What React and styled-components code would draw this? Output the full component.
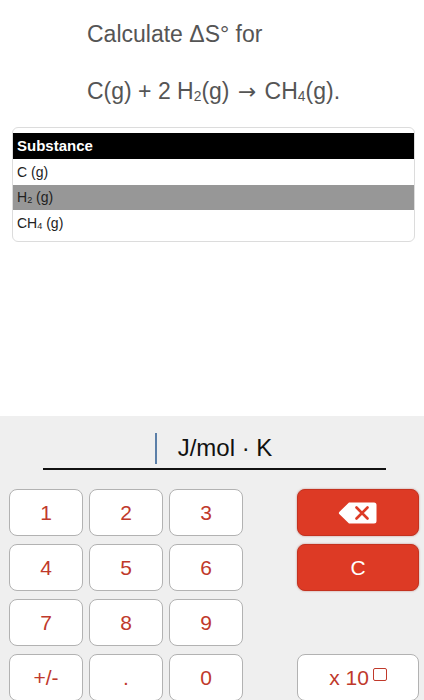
import React from "react";
import styled, { createGlobalStyle } from "styled-components";

const GlobalStyle = createGlobalStyle`
  html, body {
    margin: 0;
    padding: 0;
    background: #fff;
  }
  body {
    font-family: "Liberation Sans", Arial, sans-serif;
  }
`;

const Page = styled.div`
  display: flex;
  flex-direction: column;
  min-height: 100vh;
`;

const Question = styled.div`
  padding: 20px 0 0 87px;
  color: #555;
  font-size: 23px;
`;

const Line = styled.p`
  margin: 0 0 ${props => props.gap || 0}px;
  line-height: 28px;
  height: 28px;
`;

const Sub = styled.sub`
  font-size: ${props => props.size || 0.6}em;
  vertical-align: -0.15em;
  line-height: 0;
`;

const Arrow = styled.span`
  font-family: "DejaVu Sans", sans-serif;
  font-size: 0.95em;
  margin: 0 2px;
`;

const TableBox = styled.div`
  margin: 22px 9px 0 12px;
  border: 1px solid #dcdcdc;
  border-radius: 6px;
  padding: 5px 0;
`;

const Row = styled.div`
  height: ${props => props.h || 26}px;
  line-height: ${props => props.h || 26}px;
  padding-left: 4px;
  font-size: ${props => (props.bold ? 15 : 14)}px;
  background: ${props => props.bg || "#fff"};
  color: ${props => props.color || "#222"};
  font-weight: ${props => (props.bold ? 700 : 400)};
`;

const Spacer = styled.div`
  height: 174px;
`;

const Panel = styled.div`
  flex: 1;
  background: #efefef;
  padding-top: 12px;
`;

const InputRow = styled.div`
  width: 341px;
  margin: 0 0 0 43px;
  height: 40px;
  border-bottom: 2px solid #111;
  display: flex;
  align-items: center;
  justify-content: center;
  gap: 21px;
  padding-right: 2px;
`;

const Cursor = styled.span`
  display: block;
  width: 2px;
  height: 31px;
  background: #5b7fa8;
`;

const Units = styled.span`
  font-size: 24px;
  color: #111;
`;

const Keypad = styled.div`
  margin-top: 19px;
  padding: 0 5px 0 9px;
  display: grid;
  grid-template-columns: 74px 74px 74px 1fr 122px;
  grid-auto-rows: 47px;
  column-gap: 6px;
  row-gap: 8px;
`;

const Key = styled.button`
  grid-column: ${props => props.col || "auto"};
  grid-row: ${props => props.row || "auto"};
  box-sizing: border-box;
  margin: 0;
  padding: 0;
  border: 1.5px solid #b2b2b2;
  border-radius: 8px;
  background: #fff;
  color: #c0392b;
  font-family: "Liberation Sans", Arial, sans-serif;
  font-size: 21px;
  display: flex;
  align-items: center;
  justify-content: center;
`;

const RedKey = styled(Key)`
  background: #dd3a25;
  border: 1px solid #c4321f;
  box-shadow: 0 0 2px rgba(150, 30, 20, 0.5);
  color: #fff;
`;

const Box = styled.span`
  display: inline-block;
  width: 12px;
  height: 11px;
  border: 1.5px solid #c0392b;
  border-radius: 2px;
  margin-left: 4px;
  transform: translateY(-3px);
`;

const BackspaceIcon = () => (
  <svg width="40" height="24" viewBox="0 0 40 24">
    <path
      d="M11 1.5 H36 a2.5 2.5 0 0 1 2.5 2.5 V20 a2.5 2.5 0 0 1 -2.5 2.5 H11 L1.5 13.3 a1.8 1.8 0 0 1 0 -2.6 Z"
      fill="#fff"
    />
    <path d="M18.5 6.5 L29.5 17.5 M29.5 6.5 L18.5 17.5" stroke="#dd3a25" strokeWidth="2.6" strokeLinecap="round" />
  </svg>
);

const digits = [
  ["1", "2", "3"],
  ["4", "5", "6"],
  ["7", "8", "9"],
  ["+/-", ".", "0"],
];

const App = () => {
  return (
    <Page>
      <GlobalStyle />
      <Question>
        <Line gap={29}>Calculate ΔS° for</Line>
        <Line>
          C(g) + 2 H<Sub>2</Sub>(g) <Arrow>→</Arrow> CH<Sub>4</Sub>(g).
        </Line>
      </Question>
      <TableBox>
        <Row bold bg="#000" color="#fff">Substance</Row>
        <Row>C (g)</Row>
        <Row h={25} bg="#979797">H<Sub size={0.65}>2</Sub> (g)</Row>
        <Row>CH<Sub size={0.65}>4</Sub> (g)</Row>
      </TableBox>
      <Spacer />
      <Panel>
        <InputRow>
          <Cursor />
          <Units>J/mol · K</Units>
        </InputRow>
        <Keypad>
          {digits.map((row, r) =>
            row.map((d, c) => (
              <Key key={d} row={r + 1} col={c + 1}>{d}</Key>
            ))
          )}
          <RedKey row={1} col={5}><BackspaceIcon /></RedKey>
          <RedKey row={2} col={5}>C</RedKey>
          <Key row={4} col={5}>x 10<Box /></Key>
        </Keypad>
      </Panel>
    </Page>
  );
};

export default App;
